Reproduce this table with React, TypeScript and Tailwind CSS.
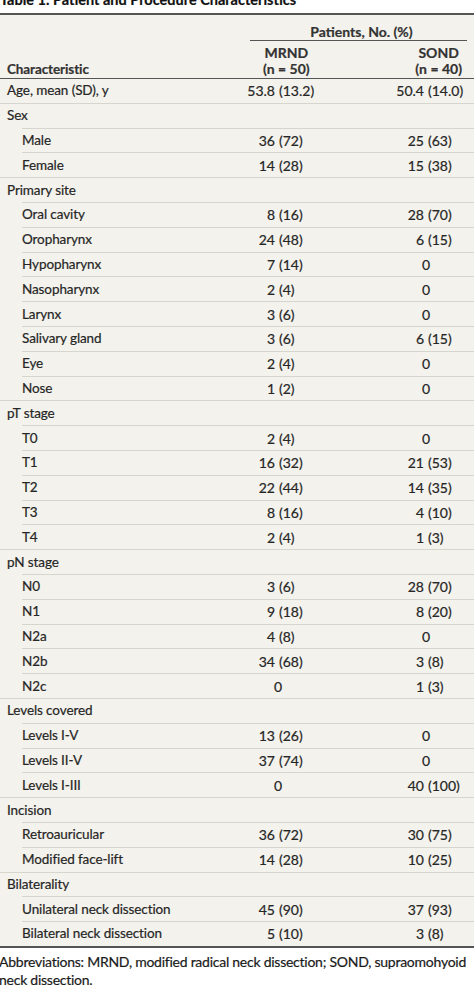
import React from "react";

type R = { label: string; a?: string; b?: string; sub?: boolean };

const rows: R[] = [
  { label: "Age, mean (SD), y", a: "53.8 (13.2)", b: "50.4 (14.0)" },
  { label: "Sex" },
  { label: "Male", a: "36 (72)", b: "25 (63)", sub: true },
  { label: "Female", a: "14 (28)", b: "15 (38)", sub: true },
  { label: "Primary site" },
  { label: "Oral cavity", a: "8 (16)", b: "28 (70)", sub: true },
  { label: "Oropharynx", a: "24 (48)", b: "6 (15)", sub: true },
  { label: "Hypopharynx", a: "7 (14)", b: "0", sub: true },
  { label: "Nasopharynx", a: "2 (4)", b: "0", sub: true },
  { label: "Larynx", a: "3 (6)", b: "0", sub: true },
  { label: "Salivary gland", a: "3 (6)", b: "6 (15)", sub: true },
  { label: "Eye", a: "2 (4)", b: "0", sub: true },
  { label: "Nose", a: "1 (2)", b: "0", sub: true },
  { label: "pT stage" },
  { label: "T0", a: "2 (4)", b: "0", sub: true },
  { label: "T1", a: "16 (32)", b: "21 (53)", sub: true },
  { label: "T2", a: "22 (44)", b: "14 (35)", sub: true },
  { label: "T3", a: "8 (16)", b: "4 (10)", sub: true },
  { label: "T4", a: "2 (4)", b: "1 (3)", sub: true },
  { label: "pN stage" },
  { label: "N0", a: "3 (6)", b: "28 (70)", sub: true },
  { label: "N1", a: "9 (18)", b: "8 (20)", sub: true },
  { label: "N2a", a: "4 (8)", b: "0", sub: true },
  { label: "N2b", a: "34 (68)", b: "3 (8)", sub: true },
  { label: "N2c", a: "0", b: "1 (3)", sub: true },
  { label: "Levels covered" },
  { label: "Levels I-V", a: "13 (26)", b: "0", sub: true },
  { label: "Levels II-V", a: "37 (74)", b: "0", sub: true },
  { label: "Levels I-III", a: "0", b: "40 (100)", sub: true },
  { label: "Incision" },
  { label: "Retroauricular", a: "36 (72)", b: "30 (75)", sub: true },
  { label: "Modified face-lift", a: "14 (28)", b: "10 (25)", sub: true },
  { label: "Bilaterality" },
  { label: "Unilateral neck dissection", a: "45 (90)", b: "37 (93)", sub: true },
  { label: "Bilateral neck dissection", a: "5 (10)", b: "3 (8)", sub: true },
];

function ValA({ v }: { v?: string }) {
  if (!v) return <div className="w-[150px]" />;
  if (v === "0")
    return (
      <div className="flex w-[150px]">
        <span className="inline-block w-[52px] text-right">0</span>
      </div>
    );
  const i = v.indexOf(" ");
  return (
    <div className="flex w-[150px] whitespace-nowrap">
      <span className="inline-block w-[45px] text-right">{v.slice(0, i)}</span>
      <span className="pl-[4px]">{v.slice(i + 1)}</span>
    </div>
  );
}

function ValB({ v }: { v?: string }) {
  if (!v) return <div className="w-[94px]" />;
  if (v === "0")
    return (
      <div className="flex w-[94px]">
        <span className="inline-block w-[50px] text-right">0</span>
      </div>
    );
  const i = v.indexOf(" ");
  return (
    <div className="flex w-[94px] whitespace-nowrap">
      <span className="inline-block w-[44px] text-right">{v.slice(0, i)}</span>
      <span className="pl-[4px]">{v.slice(i + 1)}</span>
    </div>
  );
}

export default function App() {
  return (
    <div className="w-[474px] overflow-hidden bg-white text-[14px] leading-[17px] text-[#262626] [font-family:Lato,'Open_Sans',sans-serif] [-webkit-text-stroke:0.2px_currentColor]">
      <div className="mt-[-9px] mb-[4.5px] h-[17px] whitespace-nowrap text-[14.5px] font-bold text-[#111]">
        Table 1. Patient and Procedure Characteristics
      </div>
      <div className="border-t-2 border-b-2 border-[#555] bg-[#f3f2ec]">
        {/* header */}
        <div className="flex border-b-[1.5px] border-[#555] font-bold text-[#333]">
          <div className="flex flex-1 items-end pb-[1.5px] pl-[7px] text-[13.5px] leading-[16px] tracking-[-0.1px]">
            Characteristic
          </div>
          <div className="w-[224px] pr-[7px]">
            <div className="mt-[8px] mb-[1px] border-b-[1.5px] border-[#555] text-center">
              <span className="relative left-[3px]">Patients, No. (%)</span>
            </div>
            <div className="flex justify-between pt-[3px] pb-[1.5px] pl-[13px] pr-[5px] leading-[16px]">
              <div className="text-center">
                <div>MRND</div>
                <div>(n = 50)</div>
              </div>
              <div className="text-center">
                <div>SOND</div>
                <div>(n = 40)</div>
              </div>
            </div>
          </div>
        </div>
        {rows.map((r, idx) => {
          const next = rows[idx + 1];
          const last = idx === rows.length - 1;
          const indentLine = next ? !!next.sub : false;
          return (
            <div key={idx}>
              <div className="flex h-[23.8px] items-center">
                <div
                  className={`flex-1 whitespace-nowrap text-[13.5px] tracking-[-0.1px] ${
                    r.sub ? "pl-[22px]" : "pl-[7px]"
                  }`}
                >
                  {r.label}
                </div>
                <ValA v={r.a} />
                <ValB v={r.b} />
              </div>
              {!last && <div className={`h-px bg-[#d7d6ce] ${indentLine ? "ml-[22px]" : ""}`} />}
            </div>
          );
        })}
      </div>
      <div className="ml-[-1px] mt-[5px] w-[475px] text-[14px] leading-[18px] tracking-[-0.25px] text-[#1a1a1a]">
        Abbreviations: MRND, modified radical neck dissection; SOND, supraomohyoid neck dissection.
      </div>
    </div>
  );
}
